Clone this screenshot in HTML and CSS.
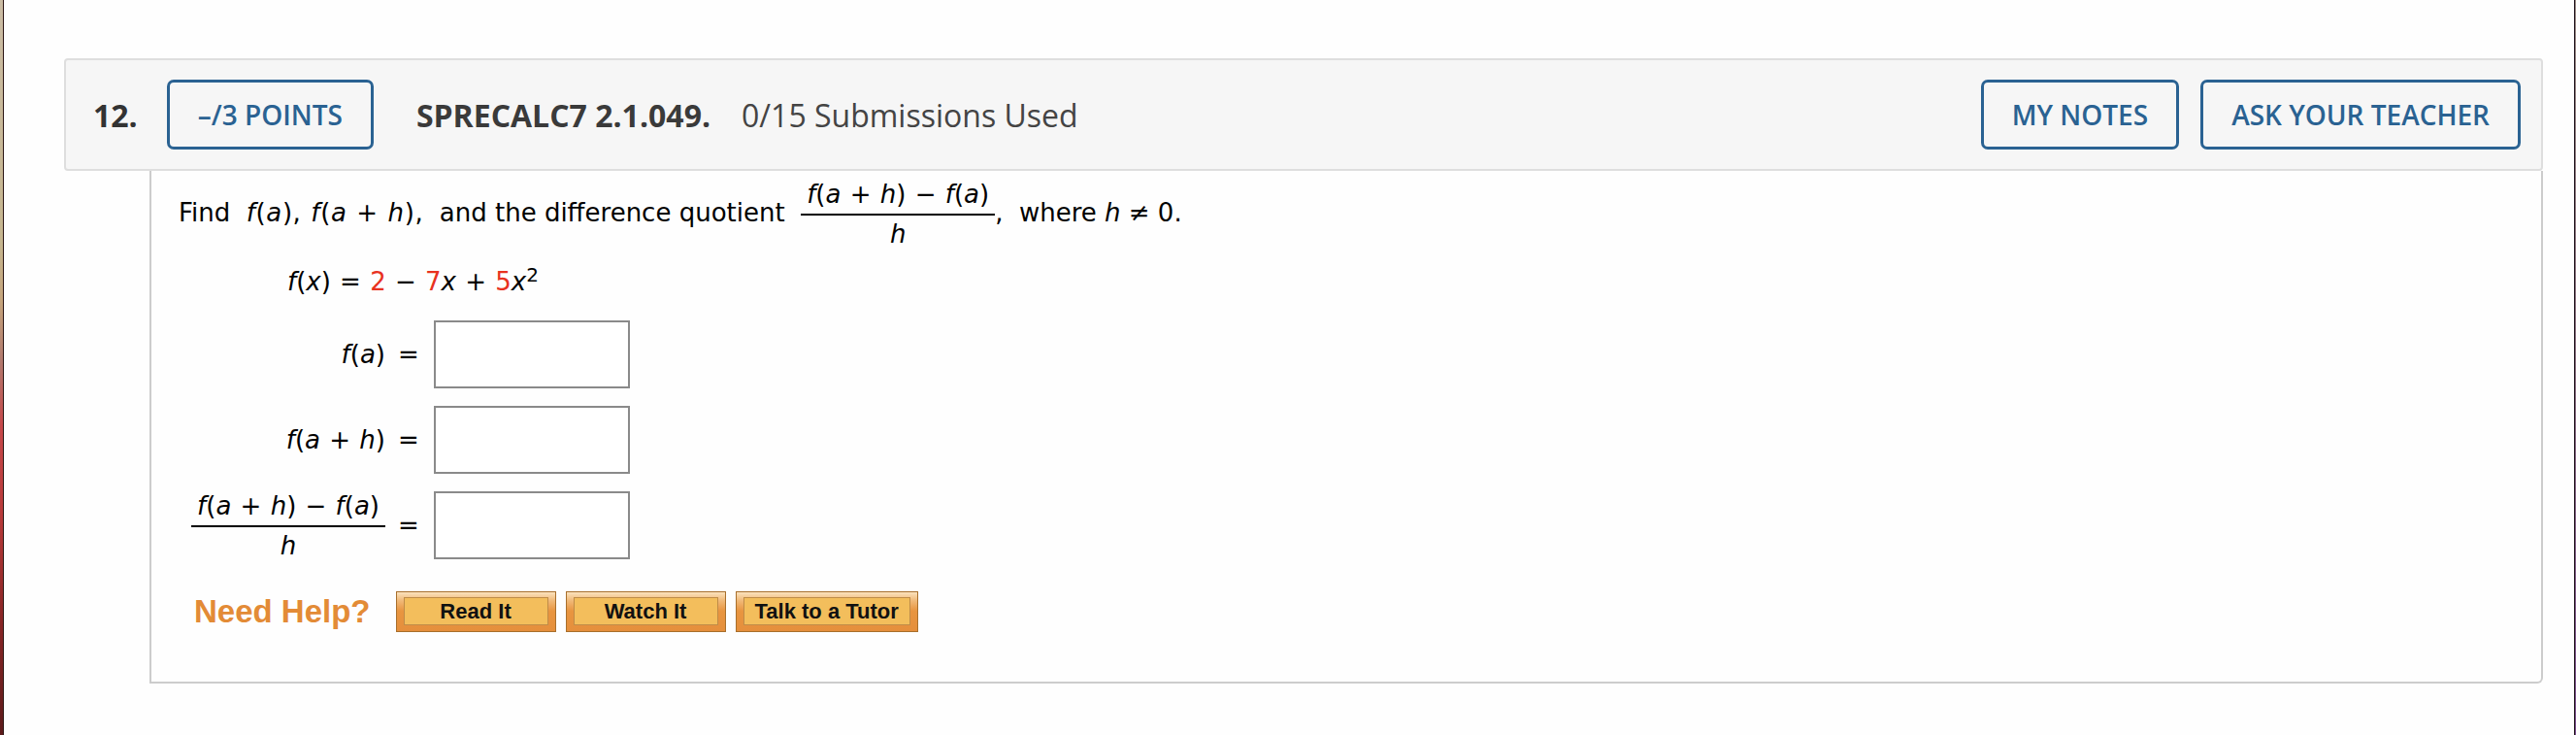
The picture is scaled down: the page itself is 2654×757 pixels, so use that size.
FILE: index.html
```html
<!DOCTYPE html>
<html lang="en">
<head>
<meta charset="utf-8">
<title>Question 12</title>
<link rel="stylesheet" href="styles.css">
</head>
<body>
<div class="page">
  <div class="edge-left"></div>
  <main class="main">
    <div class="q-header">
      <span class="q-num">12.</span>
      <span class="btn-outline">–/3 POINTS</span>
      <span class="q-code">SPRECALC7 2.1.049.</span>
      <span class="q-subs">0/15 Submissions Used</span>
      <span class="btn-outline notes">MY NOTES</span>
      <span class="btn-outline ask">ASK YOUR TEACHER</span>
    </div>
    <div class="q-body">
      <p class="q-text">Find&nbsp; <span class="m m-wide"><i class="v">f</i>(<i class="v">a</i>), <i class="v">f</i>(<i class="v">a</i> + <i class="v">h</i>),</span>&nbsp; and the difference quotient&nbsp; <span class="frac"><span class="num m"><i class="v">f</i>(<i class="v">a</i> + <i class="v">h</i>) − <i class="v">f</i>(<i class="v">a</i>)</span><span class="den"><i class="v">h</i></span></span>,&nbsp; where <i class="v">h</i> ≠ 0.</p>
      <p class="q-func m"><i class="v">f</i>(<i class="v">x</i>) = <span class="red">2</span> − <span class="red">7</span><i class="v">x</i> + <span class="red">5</span><i class="v">x</i><span class="sup">2</span></p>
      <div class="answers">
        <div class="lbl m"><span><i class="v">f</i>(<i class="v">a</i>)</span></div>
        <div class="eq">=</div>
        <input class="ans" type="text">
        <div class="lbl m"><span><i class="v">f</i>(<i class="v">a</i> + <i class="v">h</i>)</span></div>
        <div class="eq">=</div>
        <input class="ans" type="text">
        <div class="lbl"><span class="frac"><span class="num m"><i class="v">f</i>(<i class="v">a</i> + <i class="v">h</i>) − <i class="v">f</i>(<i class="v">a</i>)</span><span class="den"><i class="v">h</i></span></span></div>
        <div class="eq">=</div>
        <input class="ans" type="text">
      </div>
      <div class="help">
        <span class="help-title">Need Help?</span>
        <span class="help-btn"><span class="help-btn-inner">Read It</span></span>
        <span class="help-btn"><span class="help-btn-inner">Watch It</span></span>
        <span class="help-btn"><span class="help-btn-inner">Talk to a Tutor</span></span>
      </div>
    </div>
  </main>
  <div class="edge-right"></div>
</div>
</body>
</html>
```

FILE: styles.css
```css
* { box-sizing: border-box; }
html, body { margin: 0; padding: 0; background: #fefefe; }
body { font-family: "Open Sans", "Liberation Sans", sans-serif; }

.page { display: flex; width: 2654px; height: 757px; overflow: hidden; }

.edge-left {
  flex: none;
  width: 4px;
  border-right: 1px solid #2b1614;
  background: linear-gradient(to bottom, #cbbca4 0%, #c6b68f 33%, #c5a47c 41%, #b27a6e 49%, #c6484a 58%, #b83a3a 70%, #8a2626 84%, #5c1a1a 100%);
}
.edge-right {
  flex: none;
  width: 2px;
  border-left: 1px solid #1c1019;
  background: linear-gradient(to bottom, #9a8c86 0%, #8a6f80 50%, #7a4c8c 100%);
}

.main { flex: 1; min-width: 0; padding: 60px 32px 0 62px; }

/* header */
.q-header {
  display: flex;
  align-items: center;
  height: 116px;
  padding: 0 21px 0 28px;
  background: #f6f6f6;
  border: 2px solid #dedede;
  border-radius: 4px;
  color: #333;
}
.q-num { font-size: 32px; font-weight: 700; margin-right: 30px; }
.btn-outline {
  display: inline-flex;
  align-items: center;
  height: 72px;
  padding: 0 29px;
  border: 3px solid #2a6292;
  border-radius: 7px;
  color: #2a6292;
  font-size: 28px;
  font-weight: 600;
  white-space: nowrap;
}
.q-code { font-size: 32px; font-weight: 700; margin-left: 44px; color: #3a3a3a; }
.q-subs { font-size: 32px; margin-left: 32px; color: #444; }
.notes { margin-left: auto; }
.ask { margin-left: 22px; }

/* body */
.q-body {
  margin-left: 88px;
  border: 2px solid #cccccc;
  border-top: 0;
  border-bottom-right-radius: 6px;
  padding: 10px 28px 51px 28px;
  color: #000;
  font-family: "DejaVu Sans", Verdana, sans-serif;
  font-size: 26px;
}
.v { font-style: italic; }
.m { word-spacing: 1px; }
.m-wide { letter-spacing: 0.6px; }
.red { color: #e8321f; }

.q-text { margin: 0; white-space: nowrap; }

.frac {
  display: inline-flex;
  flex-direction: column;
  vertical-align: middle;
  text-align: center;
}
.num { line-height: 28px; padding: 0 6px 6px; border-bottom: 2px solid #000; white-space: nowrap; }
.den { line-height: 28px; margin-top: 5px; }

.q-func { margin: 20px 0 0 112px; line-height: 30px; }
.sup { font-size: 20px; vertical-align: 9px; line-height: 0; }

.answers {
  display: grid;
  grid-template-columns: 213px auto 202px;
  align-items: center;
  row-gap: 18px;
  margin-top: 25px;
  width: max-content;
}
.lbl { display: flex; justify-content: flex-end; align-items: center; line-height: 30px; white-space: nowrap; }
.eq { padding: 0 15px 0 13px; line-height: 30px; }
.ans {
  display: block;
  width: 202px;
  height: 70px;
  margin: 0;
  padding: 0;
  border: 2px solid #8a8a8a;
  border-radius: 0;
  background: #fff;
  font: inherit;
}

/* help */
.help { display: flex; align-items: center; gap: 10px; margin: 33px 0 0 16px; }
.help-title {
  font-family: "Liberation Sans", Arial, sans-serif;
  font-weight: 700;
  font-size: 33px;
  color: #e38b36;
  margin-right: 16px;
}
.help-btn {
  display: flex;
  height: 42px;
  min-width: 165px;
  padding: 5px 7px 6px;
  border: 1px solid #a86f2c;
  background: linear-gradient(to bottom, #fbe2bd 0%, #f0b877 22%, #e89540 48%, #e58f3c 100%);
}
.help-btn-inner {
  flex: 1;
  display: flex;
  align-items: center;
  justify-content: center;
  padding: 0 11px;
  background: #f3be5c;
  border: 1px solid #bf8c48;
  font-family: "Liberation Sans", Arial, sans-serif;
  font-weight: 700;
  font-size: 22px;
  color: #111;
  white-space: nowrap;
}
```
